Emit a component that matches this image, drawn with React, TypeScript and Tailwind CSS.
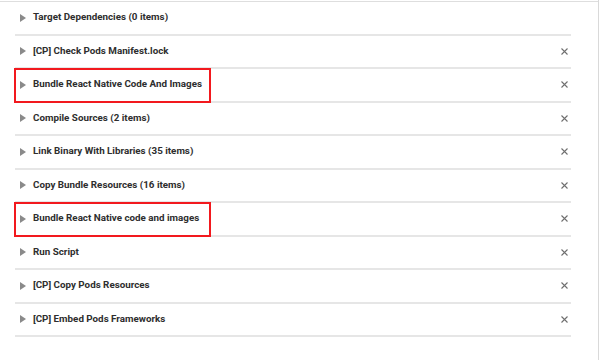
import React from "react";

const rows: { label: string; close: boolean; boxed?: boolean }[] = [
  { label: "Target Dependencies (0 items)", close: false },
  { label: "[CP] Check Pods Manifest.lock", close: true },
  { label: "Bundle React Native Code And Images", close: true, boxed: true },
  { label: "Compile Sources (2 items)", close: true },
  { label: "Link Binary With Libraries (35 items)", close: true },
  { label: "Copy Bundle Resources (16 items)", close: true },
  { label: "Bundle React Native code and images", close: true, boxed: true },
  { label: "Run Script", close: true },
  { label: "[CP] Copy Pods Resources", close: true },
  { label: "[CP] Embed Pods Frameworks", close: true },
];

function Triangle() {
  return (
    <svg width="6" height="8" viewBox="0 0 6 8" className="shrink-0">
      <path d="M0 0 L6 4 L0 8 Z" fill="#8a8a8a" />
    </svg>
  );
}

function Close() {
  return (
    <svg width="7" height="7" viewBox="0 0 7 7" className="shrink-0">
      <path d="M0.5 0.5 L6.5 6.5 M6.5 0.5 L0.5 6.5" stroke="#6f6f6f" strokeWidth="1.1" />
    </svg>
  );
}

export default function App() {
  return (
    <div
      className="relative w-[600px] h-[360px] bg-white overflow-hidden"
      style={{ fontFamily: 'Roboto, "Liberation Sans", Arial, sans-serif' }}
    >
      <div className="flex h-full">
        <div className="flex-1 flex flex-col">
          <div className="mt-[1px] h-[1px] bg-[#dedede]" />
          <div className="ml-[15px] w-[556px] flex flex-col">
            {rows.map((r, i) => (
              <div
                key={i}
                className="relative h-[33.5px] flex items-center border-b-2 border-[#e6e6e6] pl-[5px] pr-[3px]"
              >
                <Triangle />
                <span className="ml-[7px] text-[9.8px] font-bold text-[#2e2e2e]">
                  {r.label}
                </span>
                <div className="flex-1" />
                {r.close && <Close />}
                {r.boxed && (
                  <div className="absolute left-[-1px] top-[-1px] w-[197px] h-[35px] border-2 border-[#f2191e] pointer-events-none" />
                )}
              </div>
            ))}
          </div>
        </div>
        <div className="w-[1px] h-full bg-[#d9d9d9] mr-[1px]" />
      </div>
    </div>
  );
}
